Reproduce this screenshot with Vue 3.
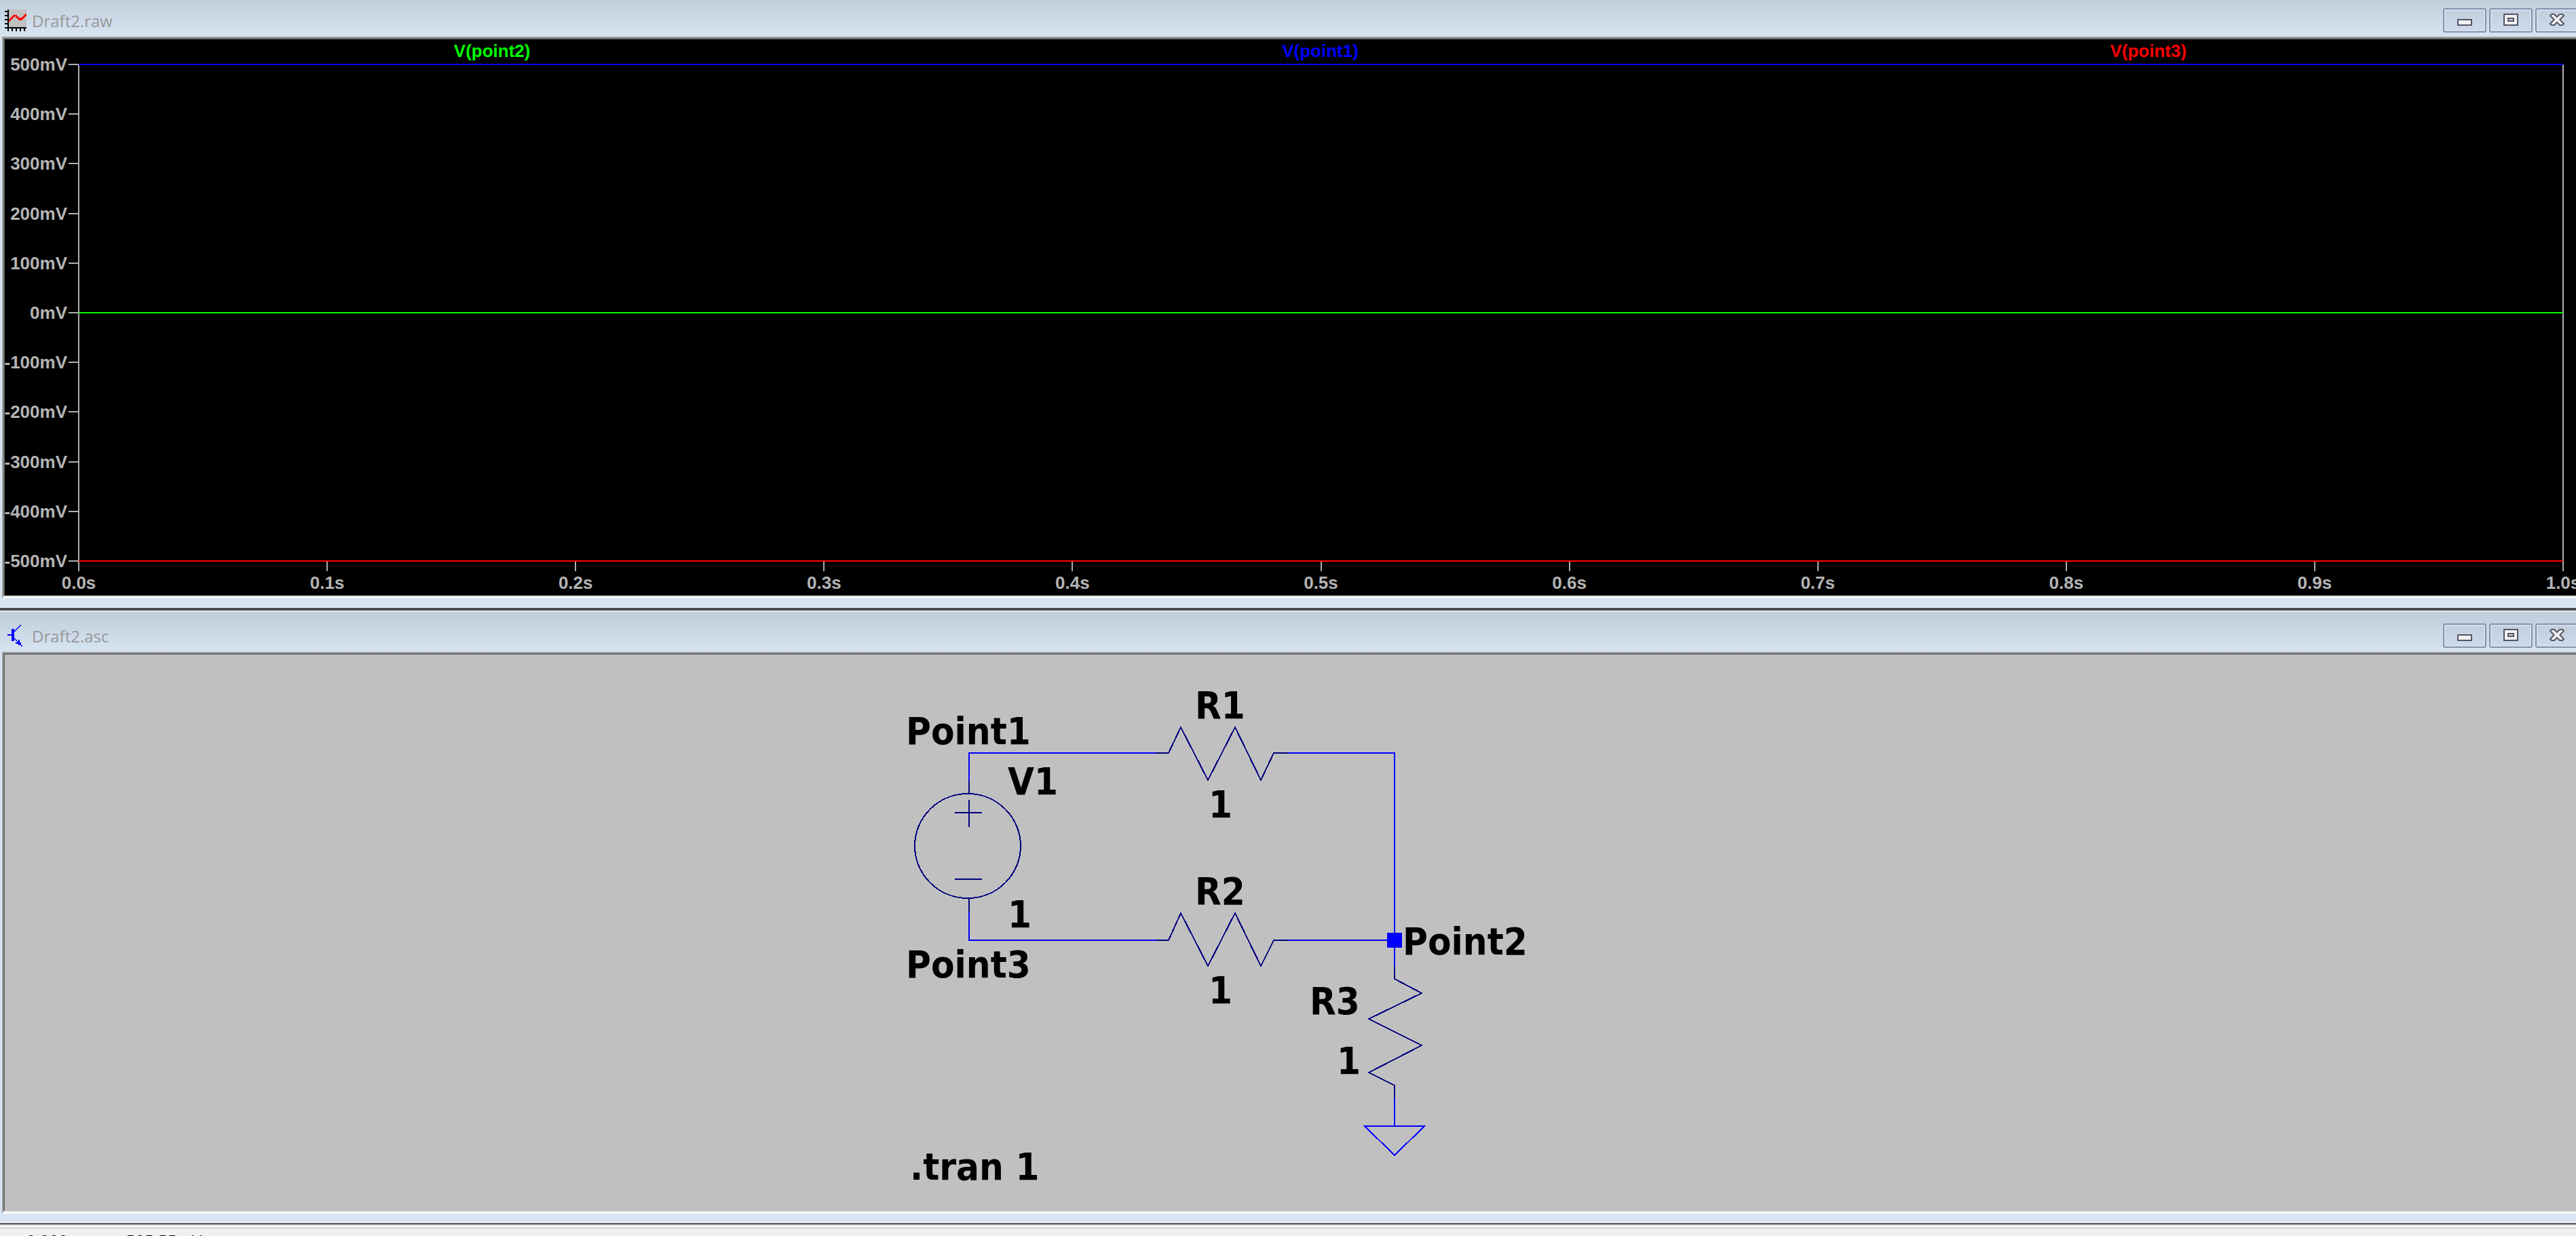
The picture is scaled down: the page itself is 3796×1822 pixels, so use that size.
<script setup>
const yTicks = ['500mV', '400mV', '300mV', '200mV', '100mV', '0mV', '-100mV', '-200mV', '-300mV', '-400mV', '-500mV']
  .map((label, i) => ({ label, pos: `${i * 10}%` }))

const xTicks = ['0.0s', '0.1s', '0.2s', '0.3s', '0.4s', '0.5s', '0.6s', '0.7s', '0.8s', '0.9s', '1.0s']
  .map((label, i) => ({ label, pos: `${i * 10}%` }))

const traces = [
  { name: 'V(point2)', color: '#00ff00', level: '50%' },
  { name: 'V(point1)', color: '#0000ff', level: '0%' },
  { name: 'V(point3)', color: '#ff0000', level: '100%' }
]

const labels = [
  { text: 'Point1', x: 1328, y: 132 },
  { text: 'V1', x: 1478, y: 206 },
  { text: '1', x: 1478, y: 402 },
  { text: 'Point3', x: 1328, y: 476 },
  { text: 'R1', x: 1754, y: 94 },
  { text: '1', x: 1774, y: 240 },
  { text: 'R2', x: 1754, y: 368 },
  { text: '1', x: 1774, y: 514 },
  { text: 'Point2', x: 2060, y: 442 },
  { text: 'R3', x: 1923, y: 530 },
  { text: '1', x: 1963, y: 618 },
  { text: '.tran 1', x: 1334, y: 774 }
]

const windows = [
  { title: 'Draft2.raw', kind: 'plot' },
  { title: 'Draft2.asc', kind: 'schematic' }
]
</script>

<template>
  <main class="desktop">
    <section v-for="win in windows" :key="win.title" class="window">
      <header class="titlebar">
        <svg v-if="win.kind === 'plot'" class="app-icon" viewBox="0 0 16 16" shape-rendering="crispEdges" aria-hidden="true">
          <path d="M3 0h13v13H3z" fill="#c0c0c0" />
          <path d="M2 0h1v16H2zM0 13h16v1H0zM0 1h2v1H0zM0 4h2v1H0zM0 7h2v1H0zM0 10h2v1H0zM5 14h1v2H5zM8 14h1v2H8zM11 14h1v2h-1zM14 14h1v2h-1z" fill="#000" />
          <path d="M3 8h1v1H3zM3 7h2v1H3zM4 6h2v1H4zM5 5h2v1H5zM6 4h3v1H6zM8 5h2v1H8zM9 6h5v1H9zM10 7h3v1h-3zM13 5h2v1h-2zM14 4h2v1h-2zM15 3h1v1h-1z" fill="#f00" />
        </svg>
        <svg v-else class="app-icon" viewBox="0 0 16 16" shape-rendering="crispEdges" aria-hidden="true">
          <path d="M2 7h3v1H2zM5 3h2v9H5zM7 4h1v1H7zM8 3h1v1H8zM9 2h1v1H9zM10 1h1v1h-1zM11 0h1v1h-1zM7 10h1v1H7zM8 11h1v1H8zM10 11h1v1h-1zM9 12h2v1H9zM8 13h4v1H8zM10 14h2v1h-2zM12 15h1v1h-1z" fill="#00f" />
        </svg>
        <h1 class="title">{{ win.title }}</h1>
        <div class="controls">
          <button type="button" class="control" aria-label="Minimize">
            <svg viewBox="0 0 11 9" shape-rendering="crispEdges">
              <rect x=".5" y="4.5" width="10" height="4" fill="#f2f2f2" stroke="#545567" />
            </svg>
          </button>
          <button type="button" class="control" aria-label="Maximize">
            <svg viewBox="0 0 11 9" shape-rendering="crispEdges">
              <rect x=".5" y=".5" width="10" height="8" fill="#f2f2f2" stroke="#545567" />
              <rect x="3.5" y="3.5" width="4" height="2" fill="#c9d6e5" stroke="#545567" />
            </svg>
          </button>
          <button type="button" class="control" aria-label="Close">
            <svg viewBox="0 0 11 9">
              <path d="M1.5 .5H3.5L5.5 2.5 7.5 .5H9.5L10.5 1.5 7.6 4.5 10.5 7.5 9.5 8.5H7.5L5.5 6.5 3.5 8.5H1.5L.5 7.5 3.4 4.5 .5 1.5Z" fill="#f2f2f2" stroke="#545567" />
            </svg>
          </button>
        </div>
      </header>

      <div v-if="win.kind === 'plot'" class="client plot">
        <div class="legend">
          <span v-for="t in traces" :key="t.name" :style="{ color: t.color }">{{ t.name }}</span>
        </div>
        <svg class="graph" role="img" aria-label="Node voltages over time">
          <g class="axis">
            <line x1="0" y1="0" x2="0" y2="100%" />
            <line x1="100%" y1="0" x2="100%" y2="100%" />
            <line v-for="t in yTicks" :key="t.label" x1="-15" x2="0" :y1="t.pos" :y2="t.pos" />
            <svg class="below" y="100%" height="16">
              <line v-for="t in xTicks" :key="t.label" :x1="t.pos" :x2="t.pos" y1="0" y2="15" />
            </svg>
          </g>
          <line v-for="t in traces" :key="t.name" class="trace" :stroke="t.color" x1="0" x2="100%" :y1="t.level" :y2="t.level" />
          <text v-for="t in yTicks" :key="t.label" x="-17" :y="t.pos" dy="9" text-anchor="end">{{ t.label }}</text>
          <text v-for="t in xTicks" :key="t.label" :x="t.pos" y="100%" dy="41" text-anchor="middle">{{ t.label }}</text>
        </svg>
      </div>

      <div v-else class="client schematic">
        <svg class="circuit" role="img" aria-label="Circuit schematic">
          <g class="wire">
            <path d="M1421 186V145H1696M1891 145H2048V460M1421 380V421H1696M1891 421H2048M2048 654V695" />
            <path d="M2004 695H2092L2048 738Z" />
            <rect class="node" x="2037" y="410" width="22" height="22" />
          </g>
          <g class="part">
            <path d="M1421 186V205M1421 360V380M1421 214V254M1400 233H1440M1400 331H1440" />
            <ellipse cx="1419" cy="282" rx="78" ry="77" />
            <path d="M1696 145H1715L1733 107 1773 185 1813 107 1851 185 1870 145H1891" />
            <path d="M1696 421H1715L1733 381 1773 459 1813 381 1851 459 1870 421H1891" />
            <path d="M2048 460V478L2088 499 2010 537 2088 576 2010 616 2048 635V654" />
          </g>
          <text v-for="(l, i) in labels" :key="i" :x="l.x" :y="l.y">{{ l.text }}</text>
        </svg>
      </div>
    </section>

    <footer class="status">
      <span>x = 0.000s</span>
      <span>y = 505.55mV</span>
    </footer>
  </main>
</template>

<style>
body {
  margin: 0;
  overflow: hidden;
}
</style>

<style scoped>
.desktop {
  height: 100vh;
  overflow: hidden;
  display: flex;
  flex-direction: column;
  background: #f0f0f0;
}

.window {
  flex: none;
  box-sizing: border-box;
  border-top: 2px solid #4b4b50;
  border-bottom: 2px solid #4b4b50;
  background: #d7e4f2;
  box-shadow: inset 0 2px #e6ebf3, inset 0 -2px #e6ebf3;
  padding: 2px 0 14px;
}

.window:first-child {
  margin-top: -9px;
}

.titlebar {
  display: flex;
  align-items: center;
  height: 59px;
  padding-left: 7px;
  overflow: hidden;
  background: linear-gradient(#bfccda, #d7e4f2);
}

.app-icon {
  width: 32px;
  height: 32px;
  margin-top: 11px;
}

.title {
  flex: 1;
  margin: 12px 0 0 8px;
  font: 400 24px/32px "Open Sans", sans-serif;
  color: #999;
}

.controls {
  display: flex;
  gap: 4px;
  margin: 11px -4px 0 0;
}

.control {
  box-sizing: border-box;
  width: 64px;
  height: 36px;
  padding: 0 0 2px;
  display: grid;
  place-items: center;
  border: 2px solid #8793b0;
  border-radius: 3px;
  background: linear-gradient(#c1cedc, #cddaea);
  box-shadow: inset 0 0 0 2px #d3deeb;
}

.control svg {
  width: 22px;
  height: 18px;
}

.client {
  margin-left: 3px;
  overflow: hidden;
  border: solid;
  border-width: 2px 0 2px 2px;
  border-color: #a0a0a0 #a0a0a0 #fff;
}

.client::before,
.client::after {
  content: "";
  display: block;
  height: 2px;
  background: #696969;
}

.client::after {
  background: #e3e3e3;
}

.plot {
  background: linear-gradient(90deg, #696969 2px, #000 2px);
  font: 700 26px/34px "Liberation Sans", Arial, sans-serif;
}

.legend {
  display: flex;
  height: 37px;
  margin: 0 20px 0 110px;
}

.legend span {
  flex: 1;
  text-align: center;
}

.graph {
  display: block;
  overflow: visible;
  width: calc(100% - 130px);
  height: 732px;
  margin: 0 19px 51px 111px;
}

.below {
  overflow: visible;
}

.axis line {
  stroke: #b0b0b0;
  stroke-width: 2px;
}

.trace {
  stroke-width: 2px;
}

.graph line {
  shape-rendering: crispEdges;
}

.graph text {
  fill: #b4b4b4;
}

.schematic {
  background: linear-gradient(90deg, #696969 2px, #c0c0c0 2px);
}

.circuit {
  display: block;
  box-sizing: border-box;
  width: 100%;
  height: 820px;
  padding-left: 2px;
  overflow: visible;
  font: 700 56px "DejaVu Sans Condensed", Tahoma, sans-serif;
}

.wire,
.part {
  fill: none;
  stroke-width: 2px;
  shape-rendering: crispEdges;
}

.wire {
  stroke: #0000ff;
}

.part {
  stroke: #000080;
}

.node {
  fill: #0000ff;
  stroke: none;
}

.status {
  flex: none;
  display: flex;
  gap: 36px;
  padding: 4px 0;
  border-top: 2px solid #e3e3e3;
  box-shadow: inset 0 2px #fff, inset 0 4px #d5d5d5;
  font: 400 24px/36px "Open Sans", sans-serif;
  color: #000;
}
</style>
